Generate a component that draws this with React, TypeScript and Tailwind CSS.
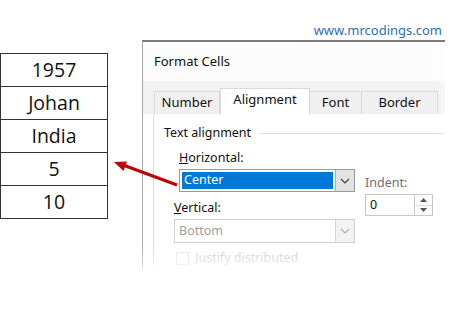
import React from "react";

const rows = ["1957", "Johan", "India", "5", "10"];

function Chevron({ color = "#444" }: { color?: string }) {
  return (
    <svg width="10" height="6" viewBox="0 0 10 6">
      <path d="M1 1 L5 5 L9 1" fill="none" stroke={color} strokeWidth="1.2" />
    </svg>
  );
}

export default function App() {
  return (
    <div className="relative w-[474px] h-[323px] bg-white overflow-hidden font-['Noto_Sans',sans-serif]">
      <div className="flex items-start">
        <table className="mt-[53px] w-[108px] border-collapse font-['Open_Sans',sans-serif] text-[19.5px] text-[#111]">
          <tbody>
            {rows.map((r) => (
              <tr key={r}>
                <td className="h-[33px] p-0 border-[1.5px] border-[#333] text-center leading-none">{r}</td>
              </tr>
            ))}
          </tbody>
        </table>
        <div className="ml-[34px] w-[303px] flex flex-col">
          <div className="h-[40px] flex items-end justify-end pr-[3px] pb-[3px] text-[13px] text-[#2e6fb0] leading-none">
            www.mrcodings.com
          </div>
          <div className="border-t-2 border-t-[#7c7c7c] border-l border-l-[#a8a8a8] bg-white h-[230px]">
            <div className="h-[39px] pl-[11px] flex items-center text-[13px] text-[#111] bg-[#fcfcfc]">Format Cells</div>
            <div className="h-[33px] bg-[#f1f1f1] flex items-end pl-[11px] text-[13px] text-[#111]">
              <div className="w-[66px] h-[23px] border border-[#d9d9d9] border-b-0 bg-[#f0f0f0] flex items-center justify-center">Number</div>
              <div className="w-[90px] h-[26px] border border-[#d9d9d9] border-b-0 bg-white flex items-center justify-center pb-[3px]">Alignment</div>
              <div className="w-[52px] h-[23px] border border-[#d9d9d9] border-b-0 border-l-0 bg-[#f0f0f0] flex items-center justify-center">Font</div>
              <div className="w-[76px] h-[23px] border border-[#d9d9d9] border-b-0 border-l-0 bg-[#f0f0f0] flex items-center justify-center">Border</div>
            </div>
            <div className="ml-[10px] border-l border-[#dcdcdc] pl-[10px] pt-[11px] text-[12.5px] text-[#111]">
              <div className="flex items-center h-[16px]">
                <span className="leading-none">Text alignment</span>
                <div className="flex-1 ml-[8px] h-px bg-[#dedede]" />
              </div>
              <div className="flex ml-[10px] mt-[9px]">
                <div className="w-[181px] flex flex-col">
                  <div className="ml-[5px] h-[16px] leading-[16px]"><span className="underline">H</span>orizontal:</div>
                  <div className="ml-[5px] mt-[3px] h-[23px] border border-[#9a9a9a] flex">
                    <div className="flex-1 m-[2px] bg-[#0078d7] text-white pl-[2px] flex items-center leading-none">Center</div>
                    <div className="w-[19px] bg-[#e3e3e3] border-l border-[#adadad] flex items-center justify-center"><Chevron /></div>
                  </div>
                  <div className="mt-[8px] h-[16px] leading-[16px]"><span className="underline">V</span>ertical:</div>
                  <div className="mt-[3px] h-[24px] border border-[#cfcfcf] flex">
                    <div className="flex-1 pl-[4px] flex items-center text-[#9e9e9e] leading-none">Bottom</div>
                    <div className="w-[19px] bg-[#f2f2f2] border-l border-[#d8d8d8] flex items-center justify-center"><Chevron color="#b0b0b0" /></div>
                  </div>
                  <div className="mt-[8px] flex items-center h-[14px]">
                    <div className="ml-[2px] w-[13px] h-[13px] border border-[#e2e2e2]" />
                    <span className="ml-[6px] text-[#cfcfcf] leading-none">Justify distributed</span>
                  </div>
                </div>
                <div className="ml-[10px] mt-[25px] flex flex-col">
                  <div className="h-[16px] leading-[16px] text-[#6f6f6f]">Indent:</div>
                  <div className="mt-[3px] flex h-[22px]">
                    <div className="w-[50px] border border-[#c8c8c8] pl-[4px] flex items-center leading-none">0</div>
                    <div className="w-[18px] border border-l-0 border-[#c8c8c8] flex flex-col">
                      <div className="flex-1 flex items-center justify-center border-b border-[#dcdcdc]">
                        <svg width="7" height="4" viewBox="0 0 7 4"><path d="M0 4 L3.5 0 L7 4Z" fill="#555" /></svg>
                      </div>
                      <div className="flex-1 flex items-center justify-center">
                        <svg width="7" height="4" viewBox="0 0 7 4"><path d="M0 0 L3.5 4 L7 0Z" fill="#555" /></svg>
                      </div>
                    </div>
                  </div>
                </div>
              </div>
            </div>
          </div>
        </div>
      </div>
      <div className="absolute left-[436px] top-[42px] w-[38px] h-[281px] bg-linear-to-r from-white/0 to-white to-50%" />
      <div className="absolute left-[130px] top-[248px] w-[344px] h-[75px] bg-linear-to-b from-white/0 to-white to-40%" />
      <svg className="absolute left-0 top-0 pointer-events-none" width="474" height="323">
        <line x1="177" y1="185" x2="123" y2="165" stroke="#c00000" strokeWidth="3" />
        <path d="M114 162 L123.5 171 L127 161.5 Z" fill="#c00000" />
      </svg>
    </div>
  );
}
